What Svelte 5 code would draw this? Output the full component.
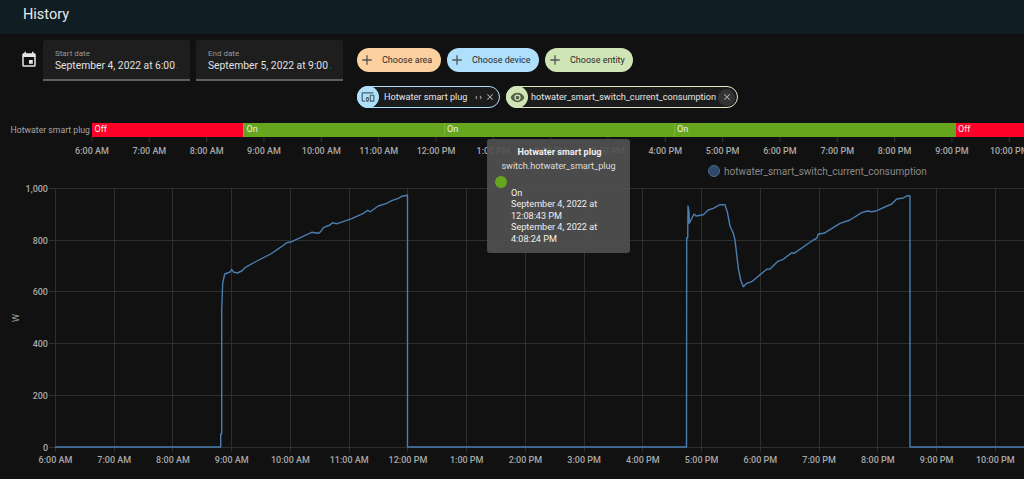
<script>
  const hours = ['6:00 AM','7:00 AM','8:00 AM','9:00 AM','10:00 AM','11:00 AM','12:00 PM','1:00 PM','2:00 PM','3:00 PM','4:00 PM','5:00 PM','6:00 PM','7:00 PM','8:00 PM','9:00 PM','10:00 PM'];
  const tlTicks = hours.map((label, i) => ({ label, x: 92 + i * 57.33 }));
  const chartTicks = hours.map((label, i) => ({ label, x: 55.5 + i * 58.74 }));
  const yTicks = [['1,000',28],['800',80],['600',131],['400',183],['200',235],['0',287]];
  const segments = [
    { cls: 'off', label: 'Off', w: 151 },
    { cls: 'on', label: 'On', w: 200.5 },
    { cls: 'on', label: 'On', w: 230 },
    { cls: 'on', label: 'On', w: 282 },
    { cls: 'off', label: 'Off', w: 68.5 }
  ];
  const pts = [[55,447],[220.7,447],[220.7,434],[221.7,434],[221.7,310],[222.7,283],[224.7,274],[230,272],[231.7,269.3],[233.3,272],[237.3,273],[241.7,271],[245,267.7],[255,262],[270.7,254],[280,247.7],[286.7,242.7],[291.7,241.7],[311.7,232.3],[318.3,233.3],[320.7,231.7],[323.3,227.7],[330,225],[332.3,222.7],[337.3,223.7],[351.7,218.7],[363.3,213.3],[367.7,210.3],[370.3,211.7],[378.3,206],[386.7,203.3],[391.7,200.7],[398.3,198.3],[401.7,196.3],[407.5,195.3],[407.5,447],[686.5,447],[686.7,238],[687.7,238],[688,206],[689,211.7],[689.3,223.3],[691,220],[694,214],[696,216],[703.3,214.7],[708.3,210],[713.3,208.3],[720,204.7],[725,204.7],[727.3,211.7],[730,226],[733.3,233.3],[735,240],[738.3,268.3],[740.7,280],[743.3,286.7],[746.7,283.3],[751.7,281.7],[766.7,269.3],[770,269],[777.3,261.7],[783.3,259.3],[791.7,252.7],[794,253.3],[813.3,240],[816.7,238.3],[818.3,234],[824,233.3],[840,223.3],[850,220],[861.7,212.7],[867.3,211],[871.7,211.7],[876.7,210.7],[891.7,204],[896.7,199],[903.3,198],[907.3,195.7],[910,196],[910,447],[1024,447]];
  const line = pts.map(([x, y]) => `${x},${y - 160}`).join(' ');
  const plus = 'M19,13H13V19H11V13H5V11H11V5H13V11H19V13Z';
  const close = 'M19,6.41L17.59,5L12,10.59L6.41,5L5,6.41L10.59,12L5,17.59L6.41,19L12,13.41L17.59,19L19,17.59L13.41,12L19,6.41Z';
</script>

<div class="page">
  <header class="top"><h1>History</h1></header>

  <section class="filters">
    <svg class="cal" viewBox="0 0 24 24"><path d="M19,19H5V8H19M16,1V3H8V1H6V3H5C3.89,3 3,3.89 3,5V19A2,2 0 0,0 5,21H19A2,2 0 0,0 21,19V5C21,3.89 20.1,3 19,3H18V1M17,12H12V17H17V12Z"/></svg>
    <div class="date"><span class="lab">Start date</span><span class="val">September 4, 2022 at 6:00 AM</span></div>
    <div class="date"><span class="lab">End date</span><span class="val">September 5, 2022 at 9:00 AM</span></div>
    <div class="pickers">
      <div class="row adds">
        <div class="add area"><svg viewBox="0 0 24 24"><path d={plus}/></svg><span>Choose area</span></div>
        <div class="add device"><svg viewBox="0 0 24 24"><path d={plus}/></svg><span>Choose device</span></div>
        <div class="add entity"><svg viewBox="0 0 24 24"><path d={plus}/></svg><span>Choose entity</span></div>
      </div>
      <div class="row chips">
        <div class="chip dev">
          <div class="badge"><svg viewBox="0 0 24 24"><path d="M3 6H21V4H3C1.9 4 1 4.9 1 6V18C1 19.1 1.9 20 3 20H7V18H3V6M13 12H9V13.78C8.39 14.33 8 15.11 8 16C8 16.89 8.39 17.67 9 18.22V20H13V18.22C13.61 17.67 14 16.88 14 16S13.61 14.33 13 13.78V12M11 17.5C10.17 17.5 9.5 16.83 9.5 16S10.17 14.5 11 14.5 12.5 15.17 12.5 16 11.83 17.5 11 17.5M22 8H16C15.5 8 15 8.5 15 9V19C15 19.5 15.5 20 16 20H22C22.5 20 23 19.5 23 19V9C23 8.5 22.5 8 22 8M21 18H17V10H21V18Z"/></svg></div>
          <span class="name">Hotwater smart plug</span>
          <svg class="mini" viewBox="0 0 24 24"><path d="M18.17,12L15,8.83L16.41,7.41L21,12L16.41,16.59L15,15.17L18.17,12M5.83,12L9,15.17L7.59,16.59L3,12L7.59,7.41L9,8.83L5.83,12Z"/></svg>
          <svg class="x" viewBox="0 0 24 24"><path d={close}/></svg>
        </div>
        <div class="chip ent">
          <div class="badge"><svg viewBox="0 0 24 24"><path d="M12,9A3,3 0 0,0 9,12A3,3 0 0,0 12,15A3,3 0 0,0 15,12A3,3 0 0,0 12,9M12,17A5,5 0 0,1 7,12A5,5 0 0,1 12,7A5,5 0 0,1 17,12A5,5 0 0,1 12,17M12,4.5C7,4.5 2.73,7.61 1,12C2.73,16.39 7,19.5 12,19.5C17,19.5 21.27,16.39 23,12C21.27,7.61 17,4.5 12,4.5Z"/></svg></div>
          <span class="name">hotwater_smart_switch_current_consumption</span>
          <span class="xwrap"><svg class="x" viewBox="0 0 24 24"><path d={close}/></svg></span>
        </div>
      </div>
    </div>
  </section>

  <section class="timeline">
    <div class="tl-row">
      <span class="tl-name">Hotwater smart plug</span>
      <div class="bar">
        {#each segments as s}
          <div class="seg {s.cls}" style="width:{s.w}px">{s.label}</div>
        {/each}
      </div>
    </div>
    <svg class="tl-axis" width="1024" height="23">
      {#each tlTicks as t}
        <line x1={t.x} x2={t.x} y1="0" y2="5" class="tick"/>
        <text x={t.x} y="17" text-anchor="middle" class="axis">{t.label}</text>
      {/each}
    </svg>
  </section>

  <section class="chart">
    <svg width="1024" height="319">
      {#each yTicks as [label, y]}
        <line x1="49" x2="1024" y1={y} y2={y} class="grid"/>
        <text x="48" y={y + 3.5} text-anchor="end" class="axis">{label}</text>
      {/each}
      {#each chartTicks as t}
        <line x1={t.x} x2={t.x} y1="28" y2="292" class="grid"/>
        <text x={t.x} y="303" text-anchor="middle" class="axis">{t.label}</text>
      {/each}
      <text x="0" y="0" transform="translate(19 158) rotate(-90)" text-anchor="middle" class="axis w">W</text>
      <polyline points={line} class="series"/>
      <circle cx="714" cy="11" r="5.5" class="dot"/>
      <text x="724" y="15" class="legend">hotwater_smart_switch_current_consumption</text>
    </svg>
  </section>

  <aside class="tip">
    <div class="tip-title">Hotwater smart plug</div>
    <div class="tip-sub">switch.hotwater_smart_plug</div>
    <div class="tip-dot"></div>
    <div class="tip-body">On<br>September 4, 2022 at<br>12:08:43 PM<br>September 4, 2022 at<br>4:08:24 PM</div>
  </aside>
</div>

<style>
  :global(body) { margin: 0; background: #111111; }
  .page { position: relative; width: 1024px; height: 479px; overflow: hidden; background: #111111; color: #e1e1e1; font-family: Roboto, "Liberation Sans", sans-serif; }
  .top { height: 34px; background: #101e24; display: flex; align-items: center; padding-left: 23px; box-sizing: border-box; padding-bottom: 5px; }
  h1 { margin: 0; font-size: 14.5px; font-weight: 400; color: #e8eaeb; }
  .filters { height: 89px; display: flex; align-items: flex-start; box-sizing: border-box; padding-top: 6px; }
  .cal { width: 18px; height: 18px; fill: #e6e6e6; margin: 11px 5px 0 20px; flex: none; }
  .date { width: 147px; height: 41px; margin-right: 6px; background: #1e1e1e; border-radius: 3px 3px 0 0; border-bottom: 2px solid #5f5f5f; box-sizing: border-box; padding: 8px 12px 0; display: flex; flex-direction: column; overflow: hidden; flex: none; }
  .lab { font-size: 8px; line-height: 11px; color: #9a9a9a; }
  .val { font-size: 10.3px; line-height: 13px; white-space: nowrap; overflow: hidden; color: #e1e1e1; }
  .pickers { margin-left: 8px; padding-top: 8px; }
  .row { display: flex; gap: 6px; }
  .adds { height: 24px; margin-bottom: 14px; }
  .add { height: 24px; border-radius: 12px; box-sizing: border-box; display: flex; align-items: center; color: #2a2a2a; font-size: 9px; padding-left: 2px; }
  .add svg { width: 16px; height: 16px; fill: #555; margin-right: 7px; }
  .area { width: 84px; background: #fdd09f; }
  .device { width: 92px; background: #aedffb; }
  .entity { width: 88px; background: #cfe5b6; }
  .chips { height: 22px; }
  .chip { height: 22px; border-radius: 11px; box-sizing: border-box; display: flex; align-items: center; background: #1c1c1c; font-size: 9.15px; color: #e6e6e6; border: 1px solid; }
  .dev { width: 143px; border-color: #aedffb; }
  .ent { width: 232px; border-color: #dfe8c0; }
  .badge { width: 22px; height: 22px; margin-left: -1px; border-radius: 11px; display: flex; align-items: center; justify-content: center; flex: none; }
  .dev .badge { background: #aedffb; }
  .ent .badge { background: #cfe5b6; }
  .badge svg { width: 14px; height: 14px; fill: #47606b; }
  .ent .badge svg { fill: #56634a; width: 15px; height: 15px; }
  .name { white-space: nowrap; }
  .dev .name { margin-left: 5px; }
  .ent .name { margin-left: 3px; }
  .mini { width: 9px; height: 9px; fill: #bbb; margin-left: 7px; flex: none; }
  .x { width: 10px; height: 10px; fill: #bbb; flex: none; }
  .dev .x { margin-left: 2px; }
  .xwrap { width: 17px; height: 17px; border-radius: 50%; background: #333; display: flex; align-items: center; justify-content: center; margin-left: 2px; flex: none; }
  .timeline { height: 37px; }
  .tl-row { display: flex; height: 14px; }
  .tl-name { width: 90px; flex: none; text-align: right; font-size: 8.7px; line-height: 14px; color: #a6a6a6; }
  .bar { margin-left: 2px; display: flex; flex: none; height: 14px; }
  .seg { height: 14px; box-sizing: border-box; padding-left: 2.5px; font-size: 9px; line-height: 13px; color: #f0f0f0; }
  .seg + .seg.on { border-left: 1px solid #7ab53a; }
  .on { background: #66a61e; }
  .off { background: #ff0029; }
  .tl-axis { display: block; }
  .tick { stroke: #333; stroke-width: 1; }
  .axis { font-size: 9px; font-weight: 500; fill: #a8a8a8; font-family: Roboto, "Liberation Sans", sans-serif; }
  .w { font-weight: 400; }
  .chart { height: 319px; }
  .chart svg { display: block; }
  .grid { stroke: #2e2e2e; stroke-width: 1; shape-rendering: crispEdges; }
  .series { fill: none; stroke: #4a7eb0; stroke-width: 1.4; stroke-linejoin: round; }
  .dot { fill: #2e4a68; stroke: #4a6c8c; stroke-width: 1; }
  .legend { font-size: 10px; fill: #8a8a8a; font-family: Roboto, "Liberation Sans", sans-serif; }
  .tip { position: absolute; left: 487px; top: 139px; width: 143px; height: 114px; box-sizing: border-box; background: rgba(80,80,80,.92); border-radius: 3px; font-size: 9.1px; line-height: 11.5px; color: #f0f0f0; padding: 7px 8px 0; }
  .tip-title { text-align: center; font-weight: 700; margin-left: 2px; line-height: 12px; }
  .tip-sub { text-align: center; margin-top: 3px; color: #dedede; }
  .tip-dot { width: 12px; height: 12px; margin: 3px 0 0 0; border-radius: 50%; background: #66a61e; }
  .tip-body { margin: 0 0 0 16px; }
</style>
